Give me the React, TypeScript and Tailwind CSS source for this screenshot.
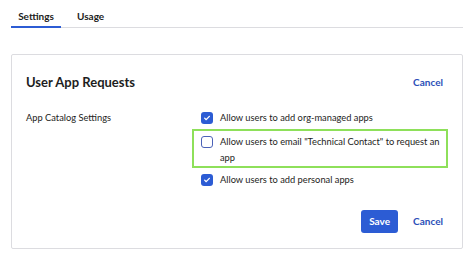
import { useState } from 'react';

function Box({ checked, onClick }: { checked: boolean; onClick: () => void }) {
  return (
    <div
      onClick={onClick}
      className={`w-[12px] h-[12px] rounded-[3px] flex items-center justify-center shrink-0 cursor-pointer ${
        checked ? 'bg-[#2c5cd4]' : 'border-[1.5px] border-[#4b62b8] bg-white'
      }`}
    >
      {checked && (
        <svg className="w-[8px] h-[8px] text-white" fill="none" viewBox="0 0 12 12">
          <path d="M2.5 6.2l2.3 2.3 4.7-5" stroke="currentColor" strokeWidth="2" strokeLinecap="round" strokeLinejoin="round" />
        </svg>
      )}
    </div>
  );
}

export default function App() {
  const [orgApps, setOrgApps] = useState(true);
  const [emailContact, setEmailContact] = useState(false);
  const [personalApps, setPersonalApps] = useState(true);

  return (
    <div className="w-[474px] h-[258px] bg-white text-[#1d1d21] font-['Lato','Liberation_Sans',sans-serif] overflow-hidden">
      {/* Tabs */}
      <div className="flex mx-[11px] border-b border-[#dcdce0] text-[10px] font-bold h-[28px]">
        <div className="w-[50px] flex justify-center pt-[9px] border-b-2 border-[#2c5cd4] -mb-px">Settings</div>
        <div className="pl-[16px] pt-[9px]">Usage</div>
      </div>

      {/* Card */}
      <div className="mx-[11px] mt-[26px] h-[195px] border border-[#dcdce0] rounded-[2px] px-[14px] pt-[18px]">
        <div className="flex items-center justify-between pr-[5px]">
          <h2 className="text-[13px] font-bold">User App Requests</h2>
          <button className="text-[10px] font-bold text-[#2c4fb8]">Cancel</button>
        </div>

        <div className="flex mt-[18px] text-[9.3px]">
          <div className="w-[168px]">App Catalog Settings</div>
          <div className="flex flex-col">
            <div className="flex items-center gap-[7px] h-[14px] pl-[9px]">
              <Box checked={orgApps} onClick={() => setOrgApps(v => !v)} />
              <span>Allow users to add org-managed apps</span>
            </div>
            <div className="mt-[4px] w-[256px] border-2 border-[#8ee05a] pl-[7px] pt-[3px] flex gap-[7px] leading-[16px]">
              <div className="pt-[2px]">
                <Box checked={emailContact} onClick={() => setEmailContact(v => !v)} />
              </div>
              <span>Allow users to email "Technical Contact" to request an app</span>
            </div>
            <div className="flex items-center gap-[7px] h-[14px] pl-[9px] mt-[5px]">
              <Box checked={personalApps} onClick={() => setPersonalApps(v => !v)} />
              <span>Allow users to add personal apps</span>
            </div>
          </div>
        </div>

        <div className="flex justify-end items-center gap-[15px] pr-[5px] mt-[23px]">
          <button className="w-[37px] h-[23px] rounded-[3px] bg-[#2c5cd4] text-white text-[10px] font-bold">Save</button>
          <button className="text-[10px] font-bold text-[#2c4fb8]">Cancel</button>
        </div>
      </div>
    </div>
  );
}
